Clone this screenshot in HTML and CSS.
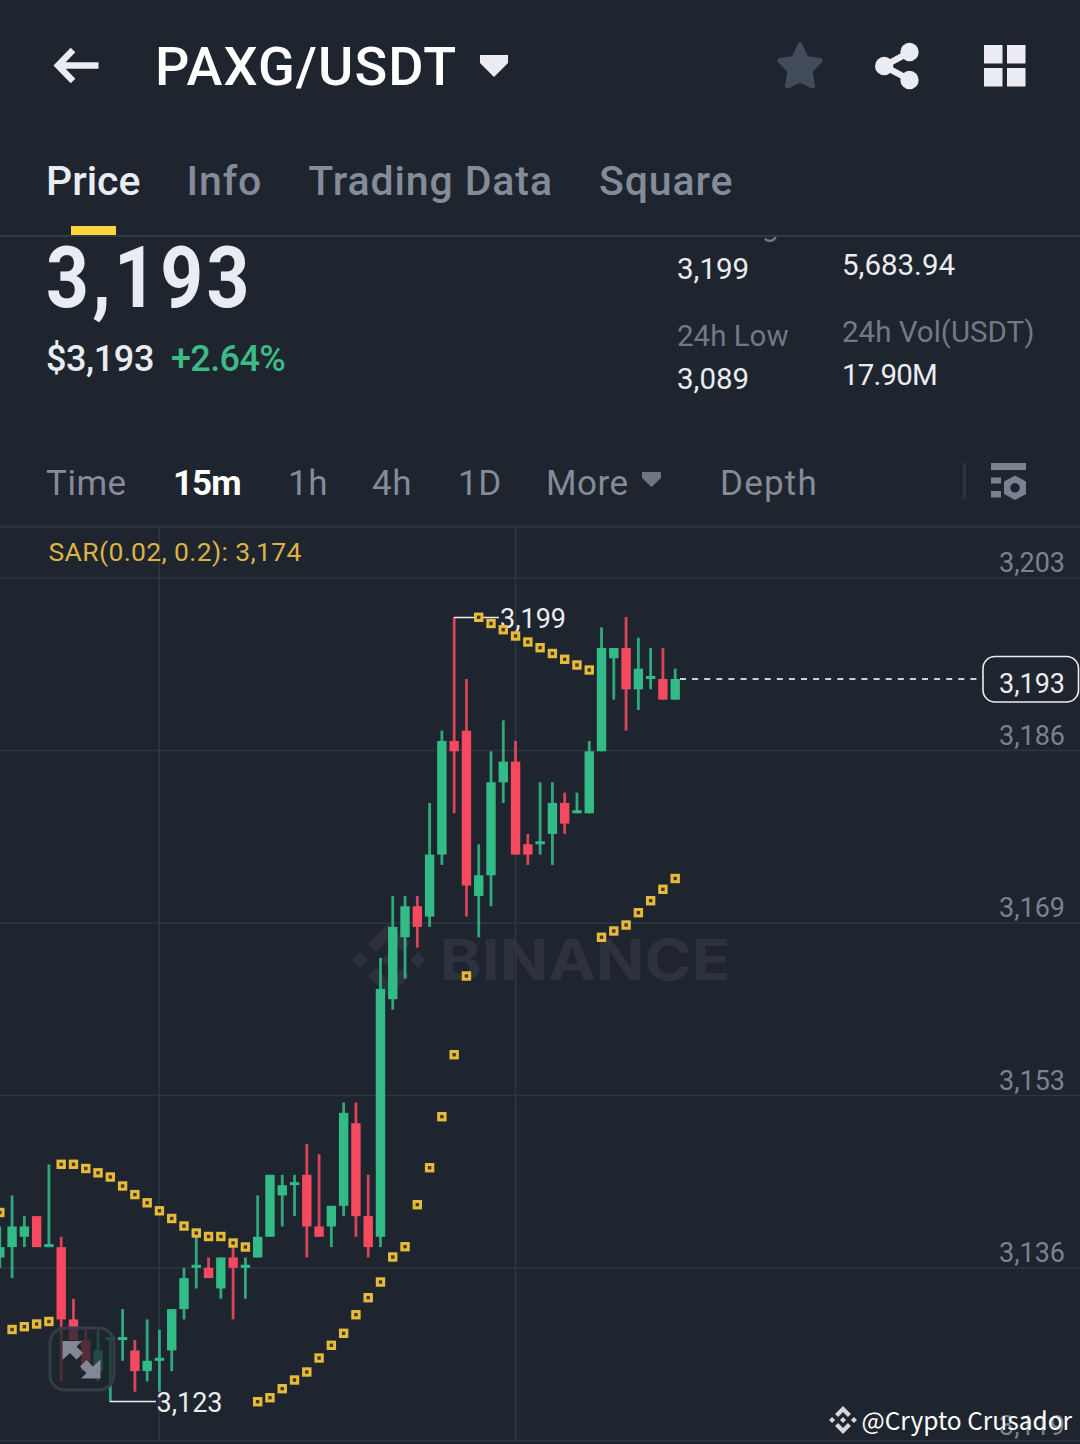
FILE: index.html
```html
<!DOCTYPE html>
<html lang="en">

<head>
    <meta charset="UTF-8" />
    <meta name="viewport" content="width=device-width, initial-scale=1.0" />
    <title>PAXG/USDT</title>
    <link rel="stylesheet" href="styles.css">
</head>

<body>
    <header class="header">
        <svg class="back" width="48" height="40" viewBox="0 0 48 40">
            <path d="M45.500 19.500H6M20 4L5 19.500L20 35" />
        </svg>
        <h1 class="pair">PAXG/USDT</h1>
        <svg class="pair-caret" width="28" height="22" viewBox="0 0 28 22">
            <path d="M0 0H28V8L14 22L0 8Z" />
        </svg>
        <div class="actions">
            <svg class="star" width="46" height="48" viewBox="0 0 46 48">
                <path d="M23 3L29 16.500L43 18.500L33 29L35.500 44L23 38L10.500 44L13 29L3 18.500L17 16.500Z" />
            </svg>
            <svg class="share" width="44" height="48" viewBox="0 0 44 48">
                <path d="M35 10L9 24L35 38" />
                <circle cx="34.500" cy="10" r="9.200" />
                <circle cx="9.200" cy="24" r="9.200" />
                <circle cx="34.500" cy="38" r="9.200" />
            </svg>
            <svg class="menu" width="42" height="42" viewBox="0 0 42 42">
                <path d="M0 0H18.500V18.500H0ZM23 0H41.500V18.500H23ZM0 23H18.500V41.500H0ZM23 23H41.500V41.500H23Z" />
            </svg>
        </div>
    </header>

    <nav class="tabs">
        <a class="tab active">Price</a>
        <a class="tab">Info</a>
        <a class="tab">Trading Data</a>
        <a class="tab">Square</a>
    </nav>

    <section class="summary">
        <div class="quote">
            <div class="last">3,193</div>
            <div class="sub"><span>$3,193</span><span class="up">+2.64%</span></div>
        </div>
        <dl class="stats price-stats">
            <dt>24h High</dt>
            <dd>3,199</dd>
            <dt>24h Low</dt>
            <dd>3,089</dd>
        </dl>
        <dl class="stats vol-stats">
            <dd>5,683.94</dd>
            <dt>24h Vol(USDT)</dt>
            <dd>17.90M</dd>
        </dl>
    </section>

    <nav class="intervals">
        <a class="time">Time</a>
        <a class="m15 active">15m</a>
        <a class="h1">1h</a>
        <a class="h4">4h</a>
        <a class="d1">1D</a>
        <a class="more">More
            <svg width="19" height="15" viewBox="0 0 19 15">
                <path d="M0 0H19V6L9.500 15L0 6Z" />
            </svg>
        </a>
        <a class="depth">Depth</a>
        <span class="divider"></span>
        <svg class="settings" width="36" height="38" viewBox="0 0 36 38">
            <path d="M0 0H35V7H0ZM0 14.500H10V20.500H0ZM0 28H10V34.500H0Z" />
            <path fill-rule="evenodd" d="M24 12.500L35 18.500V31L24 37L13 31V18.500ZM24 20A4.800 4.800 0 1 0 24 29.600A4.800 4.800 0 1 0 24 20Z" />
        </svg>
    </nav>

    <main class="chart-box">
        <svg id="chart" width="1080" height="916" viewBox="0 528 1080 916">
            <g class="brand">
                <g transform="translate(389 960)">
                    <path d="M0 -37L21 -16L13 -8L0 -21L-13 -8L-21 -16ZM0 37L21 16L13 8L0 21L-13 8L-21 16ZM-29 -8L-21 0L-29 8L-37 0ZM29 -8L37 0L29 8L21 0ZM0 -8L8 0L0 8L-8 0Z" />
                </g>
                <text x="439.500" y="980" textLength="291" lengthAdjust="spacingAndGlyphs">BINANCE</text>
            </g>
            <g id="grid"></g>
            <g id="axis"></g>
            <g id="candles"></g>
            <path class="leader" d="M454 617.500H499M110 1401.500H156" />
            <text class="mark" x="500" y="628" textLength="66">3,199</text>
            <text class="mark" x="156.500" y="1412" textLength="66">3,123</text>
            <g id="sar"></g>
            <path class="last-line" d="M680 679H978" />
            <rect class="last-box" x="983" y="656.500" width="95.500" height="45.500" rx="12" />
            <text class="mark" x="999" y="693" textLength="66">3,193</text>
            <text class="sar-label" x="48.500" y="561" textLength="253">SAR(0.02, 0.2): 3,174</text>
            <g class="expand">
                <rect x="50" y="1328" width="64" height="62" rx="15" />
                <path d="M62.500 1341H82L76.500 1346.500L83 1353L76.500 1359.500L70 1353L62.500 1360ZM100.500 1378.500H81L86.500 1373L80 1366.500L86.500 1360L93 1366.500L100.500 1359.500Z" />
            </g>
        </svg>
        <div class="author">
            <svg width="28" height="28" viewBox="-37 -37 74 74">
                <path d="M0 -37L21 -16L13 -8L0 -21L-13 -8L-21 -16ZM0 37L21 16L13 8L0 21L-13 8L-21 16ZM-29 -8L-21 0L-29 8L-37 0ZM29 -8L37 0L29 8L21 0ZM0 -8L8 0L0 8L-8 0Z" />
            </svg>
            <span>@Crypto Crusador</span>
        </div>
    </main>
    <script src="chart.js"></script>
</body>

</html>
```

FILE: styles.css
```css
body {
    margin: 0;
    width: 1080px;
    height: 1444px;
    overflow: hidden;
    background-color: #1e252e;
    color: #eaecf2;
    font-family: Roboto, "Liberation Sans", sans-serif;
}

svg {
    display: block;
    flex: none;
}

.header {
    display: flex;
    align-items: center;
    height: 132px;
    padding: 0 54px 0 53px;
    box-sizing: border-box;
}

.back {
    fill: none;
    stroke: #eaecf2;
    stroke-width: 6.5;
}

.pair {
    width: 304px;
    margin: 1px 0 0 54px;
    font-size: 54px;
    font-weight: 500;
    letter-spacing: 1.1px;
    color: #fff;
}

.pair-caret {
    margin-left: 21px;
    fill: #eaecf2;
}

.actions {
    display: flex;
    align-items: center;
    margin-left: auto;
}

.star {
    fill: #434c5a;
    stroke: #434c5a;
    stroke-width: 5;
    stroke-linejoin: round;
}

.share {
    margin: 0 65px 0 52px;
    fill: #eaecf2;
}

.share path {
    fill: none;
    stroke: #eaecf2;
    stroke-width: 6.5;
}

.menu {
    fill: #eaecf2;
}

.tabs {
    display: flex;
    gap: 46px;
    height: 103px;
    padding-left: 46px;
    border-bottom: 2px solid #323844;
}

.tab {
    display: flex;
    flex-direction: column;
    align-items: center;
    justify-content: space-between;
    padding-top: 25px;
    box-sizing: border-box;
    font-size: 41px;
    font-weight: 500;
    line-height: 48px;
    letter-spacing: 0.9px;
    color: #848b99;
}

.tab.active {
    letter-spacing: 0;
    color: #eaecf2;
}

.tab.active::after {
    content: "";
    width: 45px;
    height: 9px;
    background-color: #fcd53f;
}

.summary {
    display: flex;
    height: 204px;
    overflow: hidden;
}

.quote {
    width: 631px;
    padding-left: 46px;
}

/* narrow digits for the headline price */
.last {
    font-size: 86px;
    font-weight: 700;
    line-height: 82px;
    letter-spacing: 3.8px;
    transform: scaleX(0.87);
    transform-origin: left;
}

.sub {
    display: flex;
    gap: 17px;
    margin-top: 19px;
    font-size: 36px;
    font-weight: 500;
    line-height: 42px;
    letter-spacing: -0.4px;
}

.up {
    letter-spacing: -0.6px;
    color: #3bbb85;
}

.stats {
    margin: 0;
    font-size: 29.5px;
    line-height: 42px;
}

.stats dt {
    margin: -1px 0 1px;
    color: #717987;
}

.stats dd {
    margin: 0 0 26px;
}

.price-stats {
    width: 165px;
    margin-top: -31px;
}

.vol-stats {
    margin-top: 7px;
}

.vol-stats dd:last-child {
    letter-spacing: -0.8px;
}

.intervals {
    display: flex;
    align-items: center;
    height: 84px;
    border-bottom: 3px solid #292f3b;
    padding-left: 46px;
    font-size: 35px;
    letter-spacing: 0.5px;
    color: #848b99;
}

.intervals .active {
    font-weight: 700;
    letter-spacing: -1px;
    color: #fff;
}

.time {
    width: 127px;
}

.m15 {
    width: 115px;
}

.h1 {
    width: 84px;
}

.h4 {
    width: 86px;
}

.d1 {
    width: 88px;
}

.more {
    display: flex;
    align-items: center;
    gap: 13px;
    width: 174px;
}

.more svg {
    margin-top: -8px;
    fill: #6f7685;
}

.depth {
    width: 243px;
    letter-spacing: 1.2px;
}

.divider {
    width: 3px;
    height: 36px;
    margin-top: -5px;
    background-color: #2c3440;
}

.settings {
    margin: -3px 0 0 25px;
    fill: #7a8190;
}

.chart-box {
    position: relative;
    height: 916px;
}

#grid path {
    fill: none;
    stroke: #303641;
    stroke-width: 1.7;
}

#axis text {
    font-size: 27px;
    fill: #7c828f;
}

.brand {
    fill: #2e323e;
}

.brand text {
    font-family: Inter, sans-serif;
    font-size: 56px;
    font-weight: 700;
}

.green {
    fill: #33bb87;
}

.red {
    fill: #f4495f;
}

.wick {
    opacity: 0.88;
}

#sar rect {
    fill: #49350f;
    stroke: #e5bb3e;
    stroke-width: 3;
}

.leader {
    fill: none;
    stroke: #eaecf2;
    stroke-width: 1.6;
}

.mark {
    font-size: 27px;
    fill: #eaecf2;
}

.last-line {
    stroke: #cdd0d8;
    stroke-width: 2;
    stroke-dasharray: 6 6.1;
}

.last-box {
    fill: #1e252e;
    stroke: #eaecf2;
    stroke-width: 1.6;
}

.sar-label {
    font-size: 26.5px;
    fill: #dcb244;
}

.expand rect {
    fill: #1e252e;
    fill-opacity: 0.75;
    stroke: #343c48;
    stroke-width: 3;
}

.expand path {
    fill: #828896;
}

/* author tag sits over the chart corner */
.author {
    position: absolute;
    right: 8px;
    bottom: 6px;
    display: flex;
    align-items: center;
    gap: 4px;
    font-family: "Noto Sans CJK SC", sans-serif;
    font-size: 24.5px;
    line-height: 36px;
    color: #fff;
}

.author svg {
    fill: #d5d7dc;
}
```

FILE: chart.js
```js
const STEP = 12.28;
const UNIT = 10.33;
const TOP_PRICE = 3199;
const TOP_Y = 617;

// [open, high, low, close]
const candles = [
    [3137, 3140, 3136, 3138], [3138, 3143, 3135, 3140], [3139, 3141, 3138, 3140], [3141, 3141, 3138, 3138],
    [3138, 3146, 3138, 3138], [3138, 3139, 3125, 3131], [3131, 3133, 3129, 3129], [3129, 3130, 3126, 3126],
    [3126, 3130, 3125, 3128], [3129, 3129, 3123, 3129], [3129, 3132, 3127, 3129], [3128, 3129, 3124, 3126],
    [3126, 3131, 3125, 3127], [3127, 3130, 3124, 3127], [3128, 3132, 3126, 3132], [3132, 3136, 3131, 3135],
    [3136, 3139, 3134, 3136], [3136, 3137, 3135, 3135], [3134, 3137, 3133, 3137], [3137, 3138, 3131, 3136],
    [3136, 3137, 3133, 3136], [3137, 3143, 3137, 3139], [3139, 3145, 3139, 3145], [3143, 3145, 3140, 3144],
    [3144, 3145, 3141, 3144], [3145, 3148, 3137, 3140], [3140, 3147, 3139, 3139], [3140, 3142, 3138, 3142],
    [3142, 3152, 3141, 3151], [3150, 3152, 3139, 3141], [3141, 3145, 3137, 3138], [3139, 3166, 3138, 3163],
    [3162, 3172, 3161, 3169], [3168, 3172, 3164, 3171], [3171, 3172, 3167, 3169], [3170, 3181, 3169, 3176],
    [3176, 3188, 3175, 3187], [3187, 3199, 3180, 3186], [3188, 3193, 3170, 3173], [3172, 3177, 3168, 3174],
    [3174, 3186, 3171, 3183], [3183, 3189, 3181, 3185], [3185, 3187, 3176, 3176], [3177, 3178, 3175, 3176],
    [3177, 3183, 3176, 3177], [3178, 3183, 3175, 3181], [3181, 3182, 3178, 3179], [3180, 3182, 3180, 3180],
    [3180, 3187, 3180, 3186], [3186, 3198, 3186, 3196], [3195, 3196, 3191, 3196], [3196, 3199, 3188, 3192],
    [3192, 3197, 3190, 3194], [3193, 3196, 3192, 3193], [3193, 3196, 3191, 3191], [3191, 3194, 3191, 3193]
];

// [candle index, y]
const sar = [
    [0, 1212.5], [1, 1329.5], [2, 1326.7], [3, 1324], [4, 1321.5], [5, 1164.3], [6, 1164.3], [7, 1168.5],
    [8, 1172.8], [9, 1177], [10, 1186], [11, 1194.6], [12, 1202.8], [13, 1210.8], [14, 1218.5], [15, 1226],
    [16, 1233], [17, 1236.5], [18, 1236.5], [19, 1243], [20, 1247], [21, 1401.7], [22, 1397.7], [23, 1388.7],
    [24, 1380], [25, 1372], [26, 1358], [27, 1345.3], [28, 1333.3], [29, 1314.7], [30, 1297.7], [31, 1282],
    [32, 1257], [33, 1246.7], [34, 1204.7], [35, 1167.7], [36, 1116.7], [37, 1054.7], [38, 976], [39, 617.3],
    [40, 623.5], [41, 629.7], [42, 636], [43, 642], [44, 647.7], [45, 653.5], [46, 659.3], [47, 665],
    [48, 670], [49, 937.3], [50, 931], [51, 925], [52, 912.7], [53, 900.7], [54, 889.3], [55, 878.5]
];

const axis = [[578, '3,203'], [750.5, '3,186'], [923, '3,169'], [1095.5, '3,153'], [1268, '3,136'], [1441, '3,119']];

const x = i => i * STEP - 0.2;
const y = price => TOP_Y + (TOP_PRICE - price) * UNIT;

function add(parent, tag, attrs, text) {
    const el = document.createElementNS('http://www.w3.org/2000/svg', tag);
    for (const key in attrs) el.setAttribute(key, attrs[key]);
    if (text) el.textContent = text;
    document.getElementById(parent).appendChild(el);
}

add('grid', 'path', { d: 'M159.200 528V1441M515.500 528V1441' });
axis.forEach(([lineY, label]) => {
    add('grid', 'path', { d: `M0 ${lineY}H1080` });
    add('axis', 'text', { x: 999, y: lineY - 6, textLength: 66 }, label);
});

candles.forEach(([open, high, low, close], i) => {
    const color = close < open ? 'red' : 'green';
    const top = y(Math.max(open, close));
    const bottom = y(Math.min(open, close));
    const height = Math.max(bottom - top, 3);
    add('candles', 'rect', { class: `wick ${color}`, x: x(i) - 1.4, y: y(high), width: 2.8, height: y(low) - y(high) });
    add('candles', 'rect', { class: color, x: x(i) - 4.7, y: bottom - height, width: 9.4, height });
});

sar.forEach(([i, cy]) => {
    add('sar', 'rect', { x: x(i) - 3.2, y: cy - 3.2, width: 6.4, height: 6.4 });
});
```
